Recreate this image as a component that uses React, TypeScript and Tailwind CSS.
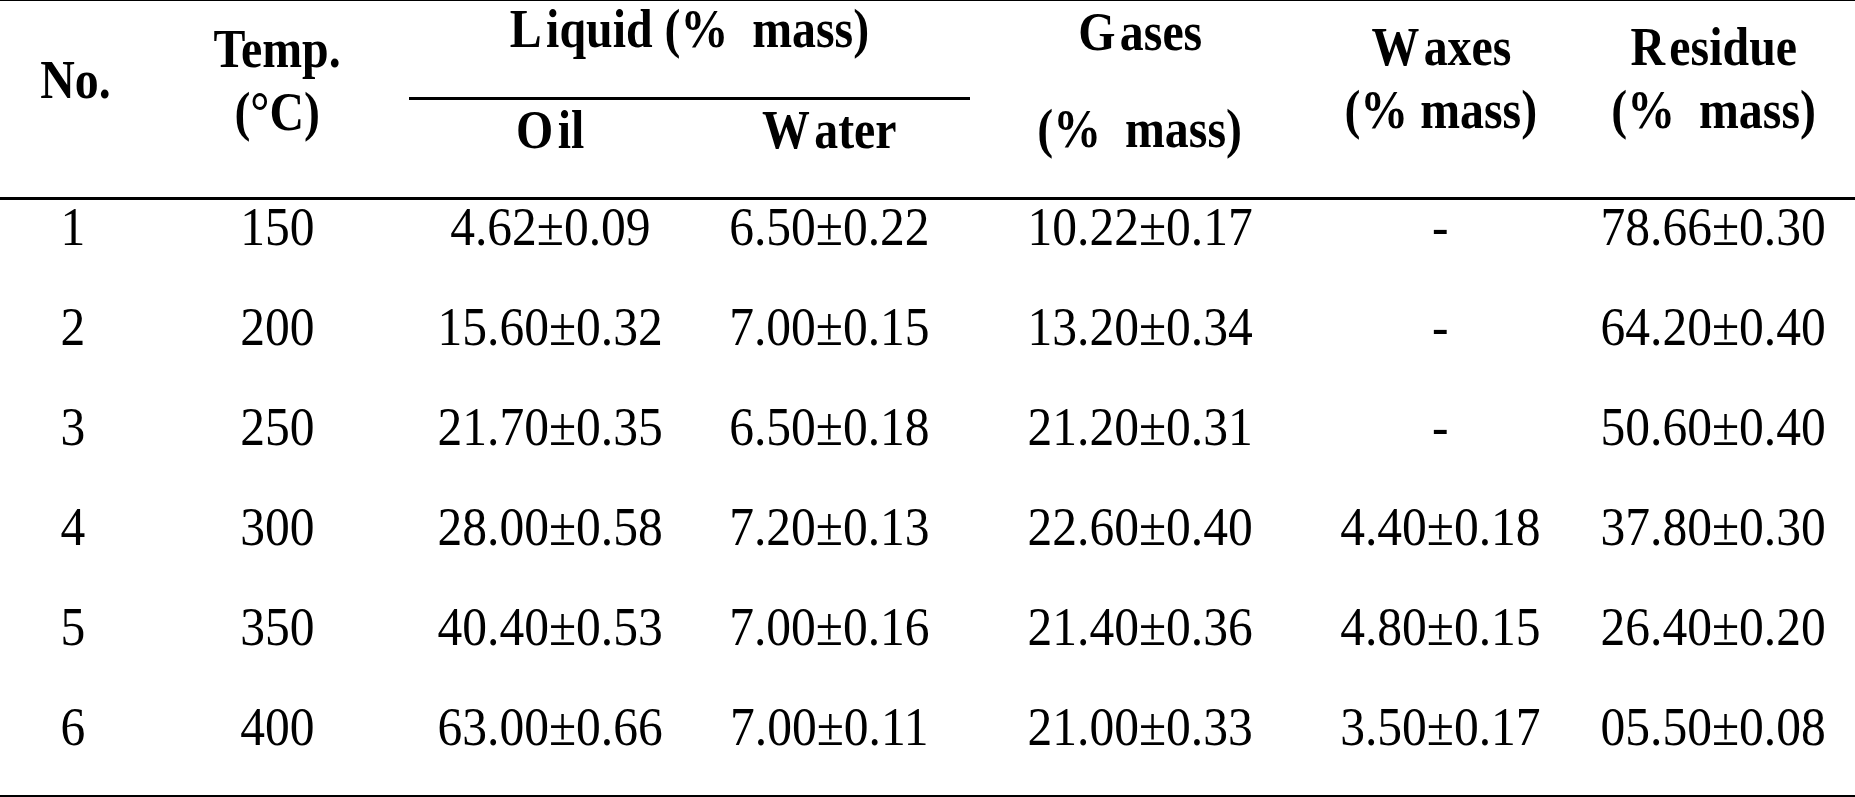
// 열분해 생성물 수율 표 - 온도별 오일/물/가스/왁스/잔류물 (% mass)
const grid = 'grid grid-cols-[150px_254px_292px_266px_356px_254px_283px]';

const rows = [
  ['1', '150', '4.62±0.09', '6.50±0.22', '10.22±0.17', '-', '78.66±0.30'],
  ['2', '200', '15.60±0.32', '7.00±0.15', '13.20±0.34', '-', '64.20±0.40'],
  ['3', '250', '21.70±0.35', '6.50±0.18', '21.20±0.31', '-', '50.60±0.40'],
  ['4', '300', '28.00±0.58', '7.20±0.13', '22.60±0.40', '4.40±0.18', '37.80±0.30'],
  ['5', '350', '40.40±0.53', '7.00±0.16', '21.40±0.36', '4.80±0.15', '26.40±0.20'],
  ['6', '400', '63.00±0.66', '7.00±0.11', '21.00±0.33', '3.50±0.17', '05.50±0.08'],
];

// 헤더 글자는 좁은 굵은 세리프처럼 보이도록 가로로 살짝 압축
function H({ children }: { children: React.ReactNode }) {
  return <span className="inline-block scale-x-[0.87] whitespace-pre">{children}</span>;
}

// 첫 글자 뒤에 살짝 벌어진 간격 (원본 PDF 렌더링 흔적)
function Gap({ first, rest }: { first: string; rest: string }) {
  return (
    <H>
      <span className="mr-[5px]">{first}</span>
      {rest}
    </H>
  );
}

export default function App() {
  return (
    <div className="w-[1855px] h-[797px] bg-white text-black font-['Liberation_Serif',serif] overflow-hidden">
      {/* 헤더 */}
      <div className={`${grid} h-[200px] border-t border-b-[3px] border-black text-[55px] font-bold`}>
        <div className="flex flex-col items-center pt-[51px] leading-[55px]">
          <H>No.</H>
        </div>
        <div className="flex flex-col items-center pt-[16px] leading-[63px]">
          <H>Temp.</H>
          <H>(°C)</H>
        </div>
        <div className="col-span-2 flex flex-col leading-[55px]">
          <div className="flex justify-center pl-[14px]">
            <Gap first="L" rest={'iquid (%  mass)'} />
          </div>
          <div className="mt-[41px] h-[3px] bg-black ml-[5px] mr-[-8px]" />
          <div className="grid grid-cols-[292px_266px] mt-[2px]">
            <div className="flex justify-center">
              <Gap first="O" rest="il" />
            </div>
            <div className="flex justify-center">
              <Gap first="W" rest="ater" />
            </div>
          </div>
        </div>
        <div className="flex flex-col items-center pt-[3px] leading-[55px]">
          <Gap first="G" rest="ases" />
          <div className="mt-[42px]">
            <H>{'(%  mass)'}</H>
          </div>
        </div>
        <div className="flex flex-col items-center pt-[14px] leading-[63px] pr-[8px]">
          <Gap first="W" rest="axes" />
          <H>(% mass)</H>
        </div>
        <div className="flex flex-col items-center pt-[14px] leading-[63px]">
          <Gap first="R" rest="esidue" />
          <H>{'(%  mass)'}</H>
        </div>
      </div>

      {/* 본문 */}
      <div className="border-b-2 border-black text-[55px] leading-[53px]">
        {rows.map((r, i) => (
          <div key={r[0]} className={`${grid} ${i === rows.length - 1 ? 'h-[95px]' : 'h-[100px]'}`}>
            {r.map((v, j) => (
              <div key={j} className={`text-center ${j === 0 ? 'pr-[4px]' : ''} ${j === 5 ? 'pr-[10px]' : ''}`}>
                <span className="inline-block scale-x-[0.9] whitespace-pre">{v}</span>
              </div>
            ))}
          </div>
        ))}
      </div>
    </div>
  );
}
